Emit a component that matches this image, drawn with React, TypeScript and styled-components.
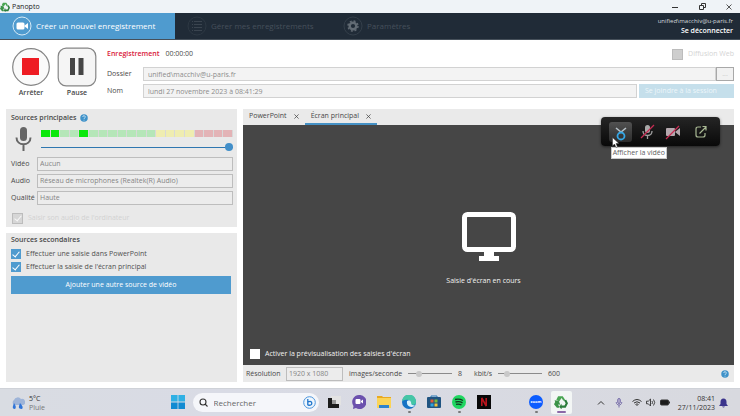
import React, { useState } from "react";
import styled, { createGlobalStyle, css } from "styled-components";

const blue = "#4f9bcf";

const GlobalStyle = createGlobalStyle`
  *, *::before, *::after { box-sizing: border-box; }
  body {
    margin: 0;
    background: #fff;
    color: #484848;
    font: 7px/10px "Open Sans", "Noto Sans", sans-serif;
  }
  button, input, select { font: inherit; color: inherit; margin: 0; padding: 0; border: 0; border-radius: 0; min-width: 0; }
  button { background: none; }
  svg { display: block; flex: none; }
  h2 { margin: 0; font-size: 7px; font-weight: 600; line-height: 10px; }
`;

const Page = styled.div`
  min-height: 100vh;
  display: flex;
  flex-direction: column;
`;

/* ---------- window title and navigation ---------- */
const TitleBar = styled.header`
  height: 13px;
  display: flex;
  align-items: center;
  gap: 2px;
  padding: 0 4px 0 0;
  background: #eff3f7;
  color: #222;
`;
const WindowButtons = styled.div`
  margin-left: auto;
  display: flex;
  gap: 13px;
`;
const WindowButton = styled.button`
  width: 14px;
  height: 13px;
  display: grid;
  place-items: center;
`;
const Nav = styled.nav`
  height: 27px;
  display: flex;
  background: #202b37;
  border-bottom: 1px solid #46505a;
`;
const NavItem = styled.button<{ $active?: boolean; $width: number }>`
  flex: none;
  width: ${(p) => p.$width}px;
  display: flex;
  align-items: center;
  gap: 4px;
  padding-left: 12px;
  font-size: 8px;
  white-space: nowrap;
  color: ${(p) => (p.$active ? "#fff" : "#46505b")};
  background: ${(p) => (p.$active ? blue : "transparent")};
`;
const Account = styled.div`
  margin-left: auto;
  padding: 3px 7px 0 0;
  display: flex;
  flex-direction: column;
  align-items: flex-end;
  color: #d5d9dd;
  font-size: 6px;
`;
const SignOut = styled.a`
  color: #fff;
  font-size: 7px;
  font-weight: 600;
  text-decoration: none;
`;

/* ---------- recording header ---------- */
const Recorder = styled.section`
  display: flex;
  padding: 7px 6px 11px 11px;
`;
const RecordButton = styled.button<{ $wide?: boolean }>`
  width: ${(p) => (p.$wide ? 52 : 40)}px;
  display: flex;
  flex-direction: column;
  align-items: center;
  gap: 1px;
  font-weight: 600;
`;
const SessionForm = styled.div`
  flex: 1;
  margin-left: 4px;
  display: flex;
  flex-direction: column;
  gap: 3px;
`;
const StatusRow = styled.div`
  display: flex;
  align-items: center;
  height: 14px;
  gap: 6px;
  margin-bottom: 3px;
`;
const Recording = styled.strong`
  color: #d9173a;
  font-weight: 600;
`;
const Webcast = styled.label`
  margin-left: auto;
  display: flex;
  align-items: center;
  gap: 5px;
  color: #d4d4d4;
`;
const FormRow = styled.div`
  display: flex;
  align-items: center;
  height: 14px;
`;
const FieldLabel = styled.label<{ $width: number }>`
  flex: none;
  width: ${(p) => p.$width}px;
`;
const TextField = styled.input`
  && {
    flex: 1;
    height: 14px;
    padding: 0 4px;
    border: 1px solid #d2d2d2;
    background: #f3f3f3;
    color: #8c8c8c;
  }
`;
const BrowseButton = styled.button`
  && {
    width: 18px;
    height: 14px;
    border: 1px solid #a8a8a8;
    background: #f1f1f1;
    color: #c8c8c8;
  }
`;
const JoinButton = styled.button`
  && {
    width: 95px;
    height: 14px;
    margin-left: 2px;
    padding-left: 6px;
    text-align: left;
    background: #c5dfeb;
    color: #edf6fa;
  }
`;

/* ---------- workspace ---------- */
const Workspace = styled.main`
  flex: 1;
  display: grid;
  grid-template-columns: 231px minmax(0, 1fr);
  gap: 6px;
  padding: 0 6px 6px;
`;
const Sidebar = styled.div`
  display: flex;
  flex-direction: column;
  gap: 6px;
`;
const Panel = styled.section<{ $grow?: boolean }>`
  padding: 4px 4px 3px 5px;
  background: #e9e9e9;
  ${(p) => p.$grow && css`flex: 1; padding-top: 2px;`}
`;
const PanelTitle = styled.div`
  display: flex;
  align-items: center;
  gap: 4px;
  margin-bottom: 3px;
`;
const AudioRow = styled.div`
  display: flex;
  gap: 4px;
  margin-bottom: 4px;
`;
const AudioControls = styled.div`
  flex: 1;
  padding-top: 4px;
`;
const Meter = styled.div`
  display: grid;
  grid-template-columns: repeat(20, 1fr);
  height: 7px;
`;
const segmentColors = { on: "#0be80b", green: "#b5e6b8", yellow: "#efedb0", red: "#e3b3b6" };
const Segment = styled.span<{ $level: keyof typeof segmentColors }>`
  border-right: 1px solid #d8d8d8;
  background: ${(p) => segmentColors[p.$level]};
`;
const Range = styled.input<{ $main?: boolean }>`
  && {
    appearance: none;
    display: block;
    flex: none;
    width: ${(p) => (p.$main ? "100%" : "44px")};
    height: ${(p) => (p.$main ? 12 : 10)}px;
    margin-top: ${(p) => (p.$main ? 4 : 0)}px;
    background: linear-gradient(${(p) => (p.$main ? "#2f77b0" : "#8b8b8b")}, ${(p) => (p.$main ? "#2f77b0" : "#8b8b8b")}) center / 100% 1px no-repeat;
  }
  &::-webkit-slider-thumb {
    appearance: none;
    width: ${(p) => (p.$main ? 8 : 6)}px;
    height: ${(p) => (p.$main ? 8 : 6)}px;
    border-radius: 50%;
    background: ${(p) => (p.$main ? "#428fc9" : "#c9c9c9")};
  }
`;
const SelectRow = styled.div`
  display: flex;
  align-items: center;
  margin-bottom: 3px;
`;
const Select = styled.select<{ $compact?: boolean }>`
  && {
    appearance: none;
    ${(p) => (p.$compact ? css`width: 57px;` : css`flex: 1;`)}
    height: 14px;
    padding: 0 2px;
    border: 1px solid #bdbdbd;
    background: #ececec;
    color: #858585;
    opacity: 1;
  }
`;
const CheckRow = styled.label<{ $faded?: boolean; $light?: boolean }>`
  display: flex;
  align-items: center;
  gap: 5px;
  height: 12px;
  margin-bottom: 1px;
  color: ${(p) => (p.$faded ? "#d2d2d2" : p.$light ? "#f2f2f2" : "#505050")};
  ${(p) => p.$faded && css`margin: 7px 0 0 1px;`}
`;
const Check = styled.input<{ $tone: "blue" | "grey" | "white" | "fill" }>`
  && {
    appearance: none;
    flex: none;
    display: grid;
    place-items: center;
    width: 10px;
    height: 10px;
    border: ${(p) => (p.$tone === "grey" || p.$tone === "fill" ? "1px solid #bcbcbc" : "0")};
    background: ${(p) => ({ blue, grey: "#d6d6d6", white: "#fff", fill: "#cecece" })[p.$tone]};
  }
  &&[disabled] {
    width: 11px;
    height: 11px;
  }
  &:checked::after {
    content: "";
    width: 4px;
    height: 7px;
    margin-bottom: 2px;
    border: solid ${(p) => (p.$tone === "grey" ? "#f7f7f7" : "#fff")};
    border-width: 0 1px 1px 0;
    transform: rotate(40deg);
  }
`;
const AddSource = styled.button`
  && {
    width: calc(100% - 2px);
    height: 18px;
    margin-top: 2px;
    background: ${blue};
    color: #fff;
  }
`;

/* ---------- preview ---------- */
const Preview = styled.section`
  position: relative;
  display: flex;
  flex-direction: column;
`;
const Tabs = styled.div`
  display: flex;
  height: 16px;
  background: #eaeaea;
`;
const Tab = styled.button<{ $active?: boolean }>`
  && {
    display: flex;
    align-items: center;
    gap: 7px;
    padding: 0 6px;
    border-bottom: 2px solid ${(p) => (p.$active ? "#4591c5" : "transparent")};
  }
`;
const Stage = styled.div`
  flex: 1;
  display: flex;
  flex-direction: column;
  padding: 0 6px 4px 7px;
  background: #464646;
  color: #f2f2f2;
`;
const StageCenter = styled.div`
  flex: 1;
  display: flex;
  flex-direction: column;
  align-items: center;
  justify-content: center;
  gap: 14px;
  padding-top: 24px;
`;
const StageCaption = styled.span`
  padding-right: 11px;
`;
const Settings = styled.div`
  display: flex;
  align-items: center;
  height: 17px;
  padding: 0 5px 0 3px;
  background: #eaeaea;
`;
const SettingLabel = styled.label<{ $width: number; $indent?: boolean }>`
  flex: none;
  width: ${(p) => p.$width}px;
  padding-left: ${(p) => (p.$indent ? 6 : 0)}px;
`;
const SettingValue = styled.output<{ $width: number }>`
  width: ${(p) => p.$width}px;
  padding-left: 6px;
`;
const HelpSlot = styled.div`
  margin-left: auto;
`;
const FloatingBar = styled.div`
  position: absolute;
  top: 8px;
  right: 14px;
  width: 119px;
  height: 29px;
  display: flex;
  align-items: center;
  gap: 3px;
  padding: 0 8px 0 8px;
  border-radius: 4px;
  background: linear-gradient(#252525, #090909);
  box-shadow: 0 1px 3px #0008;
`;
const MediaButton = styled.button<{ $hover?: boolean }>`
  && {
    width: 23px;
    height: 20px;
    display: grid;
    place-items: center;
    border-radius: 3px;
    background: ${(p) => (p.$hover ? "linear-gradient(#515151, #2c2c2c)" : "none")};
    &:last-child { margin-left: auto; }
  }
`;
const Tooltip = styled.div`
  position: absolute;
  top: 38px;
  right: 67px;
  padding: 0 1px;
  border: 1px solid #c9c9c9;
  background: #fff;
  color: #606060;
  white-space: nowrap;
`;
const Pointer = styled.svg`
  position: absolute;
  top: 28px;
  right: 114px;
`;

/* ---------- taskbar ---------- */
const Taskbar = styled.footer`
  height: 28px;
  display: grid;
  grid-template-columns: 1fr auto 1fr;
  align-items: center;
  padding: 0 12px 0 11px;
  border-top: 1px solid #cfd2d8;
  background: linear-gradient(90deg, #d9dce2, #d9dbe5 30%, #d8d9df);
`;
const Weather = styled.div`
  display: flex;
  align-items: center;
  gap: 4px;
  line-height: 9px;
  color: #333;
`;
const Muted = styled.div`
  color: #777;
`;
const Apps = styled.div`
  display: flex;
  align-items: center;
  padding-left: 3px;
`;
const SearchBox = styled.label`
  width: 126px;
  height: 19px;
  display: flex;
  align-items: center;
  gap: 6px;
  margin: 0 1px 0 8px;
  padding: 0 3px 0 6px;
  border-radius: 10px;
  background: #f5f6fa;
`;
const SearchInput = styled.input`
  && {
    flex: 1;
    background: none;
    font-size: 8px;
    outline: 0;
    &::placeholder { color: #666; opacity: 1; }
  }
`;
const AppButton = styled.button<{ $selected?: boolean; $open?: boolean; $spaced?: boolean }>`
  && {
    flex: none;
    width: 21px;
    height: 23px;
    margin-left: ${(p) => (p.$spaced ? 31 : 4)}px;
    display: flex;
    flex-direction: column;
    align-items: center;
    padding-top: 4px;
    gap: 2px;
    border-radius: 2px;
    background: ${(p) => (p.$selected ? "#f3f6f5" : "none")};
    &:first-child { width: 14px; margin-left: 0; }
  }
  &::after {
    content: "";
    width: ${(p) => (p.$selected ? 9 : 3)}px;
    height: 2px;
    border-radius: 1px;
    background: ${(p) => (p.$selected ? "#8b68a8" : p.$open ? "#777" : "transparent")};
  }
`;
const Tray = styled.div`
  justify-self: end;
  display: flex;
  align-items: center;
  gap: 4px;
  color: #333;
`;
const TrayGroup = styled.div`
  display: flex;
  align-items: center;
  gap: 10px;
  margin-right: 5px;
`;
const Clock = styled.time`
  margin-left: 4px;
  text-align: right;
  line-height: 9px;
`;

/* ---------- drawings ---------- */
const Recycle = ({ size }: { size: number }) => (
  <svg width={size} height={size} viewBox="0 0 24 24">
    <path d="M7 2h8l4 6-3 2-3-5-4 6-5-3z" fill="#49a552" />
    <path d="M17 9l4-1 3 6-4 8h-7v3l-4-5 4-5v3h5l2-4z" fill="#2d7c3c" />
    <path d="M1 9l7 1 3 7-3-1-1 2h2v4H5l-5-6 2-4z" fill="#3b9348" />
  </svg>
);
const Help = () => (
  <svg width="8" height="8" viewBox="0 0 16 16">
    <circle cx="8" cy="8" r="7.5" fill="#3f92c9" />
    <path d="M5.5 6a2.5 2.5 0 1 1 3.6 2.2Q8 8.7 8 10M8 11.5V13" fill="none" stroke="#d9edf8" strokeWidth="1.7" />
  </svg>
);
const Close = ({ size = 5 }: { size?: number }) => (
  <svg width={size} height={size} viewBox="0 0 6 6" stroke="#444" strokeWidth=".9">
    <path d="M.5.5l5 5M5.5.5l-5 5" />
  </svg>
);
const CameraBadge = () => (
  <svg width="20" height="20" viewBox="0 0 20 20">
    <circle cx="10" cy="10" r="9" fill="none" stroke="#d6eaf6" />
    <rect x="4.5" y="6.5" width="8" height="7" rx="1.5" fill="#fff" />
    <path d="M12 10l4-3v6z" fill="#fff" />
  </svg>
);
const ListBadge = () => (
  <svg width="20" height="20" viewBox="0 0 20 20" fill="none" stroke="#3a444f">
    <circle cx="10" cy="10" r="9" stroke="#2d3843" />
    <path d="M5 5.500h1M5 8.500h1M5 11.500h1M5 14.500h1M7 5.500h8M7 8.500h8M7 11.500h8M7 14.500h8" />
  </svg>
);
const GearBadge = () => (
  <svg width="20" height="20" viewBox="0 0 20 20" fill="none" stroke="#343f4a">
    <circle cx="10" cy="10" r="9" />
    <circle cx="10" cy="10" r="3.3" stroke="#626b74" strokeWidth="2.4" />
    <circle cx="10" cy="10" r="5" stroke="#626b74" strokeWidth="1.4" strokeDasharray="2 1.93" />
  </svg>
);
const StopIcon = () => (
  <svg width="40" height="40" viewBox="0 0 40 40">
    <circle cx="20" cy="20" r="18.3" fill="#fafafa" stroke="#858585" strokeWidth="1.2" />
    <rect x="11" y="11" width="17" height="17" fill="#ee1c23" />
  </svg>
);
const PauseIcon = () => (
  <svg width="40" height="40" viewBox="0 0 40 40">
    <rect x="1.2" y="1.2" width="37.6" height="37.6" rx="8" fill="#f5f5f5" stroke="#858585" strokeWidth="1.2" />
    <path d="M13 11h5v17h-5zM21.500 11h5v17h-5z" fill="#464646" />
  </svg>
);
const BigMic = () => (
  <svg width="26" height="26" viewBox="0 0 26 26" fill="none">
    <rect x="9" y="1" width="7" height="14" rx="3.5" fill="#666" />
    <path d="M5.500 11.500c0 9 14 9 14 0M12.500 18.500V25" stroke="#666" strokeWidth="2" />
  </svg>
);
const Monitor = () => (
  <svg width="54" height="50" viewBox="0 0 54 50">
    <rect x="2.500" y="2.500" width="49" height="35" rx="3" fill="none" stroke="#fff" strokeWidth="5" />
    <path d="M22 38h10v6h5v5H17v-5h5z" fill="#fff" />
  </svg>
);
const JoinVideo = () => (
  <svg width="16" height="18" viewBox="0 0 16 18" fill="none">
    <path d="M3 5l5 4 5-4" stroke="#b8c1c7" strokeWidth="1.6" />
    <circle cx="8" cy="13" r="3.500" stroke="#35a7e5" strokeWidth="1.8" />
  </svg>
);
const MutedMic = () => (
  <svg width="18" height="18" viewBox="0 0 18 18" fill="none">
    <rect x="7" y="2" width="5" height="8" rx="2.500" fill="#a8a8a8" />
    <path d="M5 8c0 6 9 6 9 0M9.500 12v4" stroke="#a0a0a0" strokeWidth="1.3" />
    <path d="M3 15L16 2" stroke="#c82c53" strokeWidth="1.2" />
  </svg>
);
const MutedCamera = () => (
  <svg width="18" height="18" viewBox="0 0 18 18" fill="none">
    <rect x="2" y="5" width="9" height="8" rx="1" fill="#b5a8ae" />
    <path d="M11 9l5-4v8z" fill="#b5a8ae" />
    <path d="M2 16L15 3" stroke="#c82c53" strokeWidth="1.3" />
  </svg>
);
const Popout = () => (
  <svg width="14" height="14" viewBox="0 0 14 14" fill="none" stroke="#a9b994" strokeWidth="1.2">
    <path d="M7 2H4Q2 2 2 4v6q0 2 2 2h5q2 0 2-2V8M5.500 8.500L12 2M8.500 1.500H12V5.500" />
  </svg>
);
const WeatherIcon = () => (
  <svg width="14" height="14" viewBox="0 0 14 14">
    <path d="M3 9a3 3 0 0 1 0-5 4 4 0 0 1 7-1 3 3 0 0 1 2 6z" fill="#9eb4d8" />
    <path d="M3 7q3 4 1 6-3 0-2-3zM9 7q4 4 2 6-4 0-3-3z" fill="#2f74d8" />
  </svg>
);
const WindowsLogo = () => (
  <svg width="14" height="14" viewBox="0 0 14 14">
    <path d="M0 0h6.600v6.600H0zM7.400 0H14v6.600H7.400z" fill="#2fb0e4" />
    <path d="M0 7.400h6.600V14H0zM7.400 7.400H14V14H7.400z" fill="#128bd2" />
  </svg>
);
const SearchIcon = () => (
  <svg width="9" height="9" viewBox="0 0 9 9" fill="none" stroke="#333" strokeWidth="1.1">
    <circle cx="4" cy="4" r="3" />
    <path d="M6 6l2.500 2.500" />
  </svg>
);
const BingIcon = () => (
  <svg width="13" height="13" viewBox="0 0 13 13" fill="none">
    <circle cx="6.500" cy="6.500" r="5.800" fill="#eef6fd" stroke="#4c94dc" />
    <path d="M4.800 3v6.200M4.800 6q4-1.600 4 1.300 0 2.500-4 1.800" stroke="#1e74cc" strokeWidth="1.3" />
  </svg>
);
const TaskView = () => (
  <svg width="14" height="14" viewBox="0 0 14 14">
    <rect x="4" y="1" width="10" height="9" fill="#e3e3e3" />
    <path d="M1 3h4v6h7v4H1z" fill="#1c1c1c" />
    <path d="M5 5h4v4H5z" fill="#9a9a9a" />
  </svg>
);
const ChatIcon = () => (
  <svg width="14" height="14" viewBox="0 0 14 14">
    <path d="M7 0a7 7 0 1 1-3 13l-3 1 .5-3A7 7 0 0 1 7 0z" fill="#6b51ad" />
    <rect x="3.500" y="4" width="5" height="5" rx="1" fill="#fff" />
    <path d="M9 6l2-1.500v4L9 7z" fill="#fff" />
  </svg>
);
const FolderIcon = () => (
  <svg width="14" height="14" viewBox="0 0 14 14">
    <path d="M0 1h5l1 1h8v4H0z" fill="#e9a921" />
    <path d="M0 3h14v10H0z" fill="#fbd457" />
    <path d="M2 10h10v3H2z" fill="#2f83cd" />
  </svg>
);
const EdgeIcon = () => (
  <svg width="14" height="14" viewBox="0 0 14 14">
    <circle cx="7" cy="7" r="7" fill="#1672c4" />
    <path d="M0 6a7 7 0 0 1 14 1q0 3-3 3-3 0-2-3Q7 3 0 6z" fill="#45c6a6" />
    <path d="M5 6q-1 5 4 6 3 .5 4-2-4 1-4-3-1-3-4-1z" fill="#d9f2fb" />
  </svg>
);
const StoreIcon = () => (
  <svg width="14" height="14" viewBox="0 0 14 14">
    <path d="M4 3V1h6v2" fill="none" stroke="#2679b7" />
    <rect y="2" width="14" height="11" rx="1" fill="#205481" />
    <path d="M3.500 4.500h3v3h-3z" fill="#e35b36" />
    <path d="M7.500 4.500h3v3h-3z" fill="#7cbb38" />
    <path d="M3.500 8.500h3v3h-3z" fill="#30a4dc" />
    <path d="M7.500 8.500h3v3h-3z" fill="#f3c43b" />
  </svg>
);
const SpotifyIcon = () => (
  <svg width="14" height="14" viewBox="0 0 14 14" fill="none" stroke="#143820" strokeWidth="1.400">
    <circle cx="7" cy="7" r="7" fill="#1fd660" stroke="none" />
    <path d="M3 4.500q4.500-1 8 1M3.500 7q4-1 7 .8M4 9.400q3-.8 5.500.6" />
  </svg>
);
const NetflixIcon = () => (
  <svg width="14" height="14" viewBox="0 0 14 14">
    <rect width="14" height="14" fill="#080808" />
    <path d="M4.800 11V3l4.400 8V3" fill="none" stroke="#b8141c" strokeWidth="1.600" />
  </svg>
);
const ZoomWord = styled.text`
  font: 700 4px "Open Sans", sans-serif;
  fill: #fff;
`;
const ZoomIcon = () => (
  <svg width="14" height="14" viewBox="0 0 14 14">
    <circle cx="7" cy="7" r="7" fill="#0b5cff" />
    <ZoomWord x="7" y="8" textAnchor="middle">zoom</ZoomWord>
  </svg>
);
const Chevron = () => (
  <svg width="8" height="8" viewBox="0 0 8 8" fill="none" stroke="#333">
    <path d="M1 5.500l3-3 3 3" />
  </svg>
);
const TrayMic = () => (
  <svg width="8" height="10" viewBox="0 0 8 10" fill="none" stroke="#7166a5" strokeWidth=".9">
    <rect x="2.700" y=".5" width="2.600" height="5" rx="1.300" fill="#b5afcf" />
    <path d="M1.200 4c0 4 5.600 4 5.600 0M4 7v2.500" />
  </svg>
);
const Wifi = () => (
  <svg width="10" height="9" viewBox="0 0 10 9" fill="none" stroke="#333">
    <path d="M.5 3.500q4.500-4 9 0M2 5q3-2.500 6 0M3.500 6.500q1.500-1.200 3 0" />
    <circle cx="5" cy="7.500" r=".6" fill="#333" stroke="none" />
  </svg>
);
const Volume = () => (
  <svg width="10" height="9" viewBox="0 0 10 9" fill="none" stroke="#333" strokeWidth=".9">
    <path d="M.5 3.200h1.800L4.500 1v7L2.300 5.800H.5zM6 3q1 1.500 0 3M7.500 1.500q2.400 3 0 6" />
  </svg>
);
const Battery = () => (
  <svg width="10" height="7" viewBox="0 0 10 7">
    <rect x=".5" y="1" width="8" height="5" rx="1" fill="#1c1c1c" stroke="#333" />
    <path d="M9 2.500h1v2H9z" fill="#333" />
  </svg>
);
const Bell = () => (
  <svg width="9" height="10" viewBox="0 0 9 10" fill="#3b348c">
    <path d="M4.500.5Q7.500.5 7.500 4v2L9 8H0l1.500-2V4q0-3.500 3-3.500zM3 8.500h3q-1.500 2-3 0z" />
  </svg>
);

const levels: (keyof typeof segmentColors)[] = Array.from({ length: 20 }, (_, i) =>
  [0, 1, 4].includes(i) ? "on" : i < 12 ? "green" : i < 16 ? "yellow" : "red"
);
const sources = [
  { id: "video", label: "Vidéo", value: "Aucun" },
  { id: "audio", label: "Audio", value: "Réseau de microphones (Realtek(R) Audio)" },
  { id: "quality", label: "Qualité", value: "Haute" },
];
const apps = [
  { name: "Applications", icon: <TaskView /> },
  { name: "Conversation", icon: <ChatIcon /> },
  { name: "Explorateur", icon: <FolderIcon /> },
  { name: "Edge", icon: <EdgeIcon />, open: true },
  { name: "Store", icon: <StoreIcon /> },
  { name: "Spotify", icon: <SpotifyIcon />, open: true },
  { name: "Netflix", icon: <NetflixIcon /> },
  { name: "Zoom", icon: <ZoomIcon />, open: true, spaced: true },
  { name: "Panopto", icon: <Recycle size={14} />, selected: true },
];

export default function App() {
  const [volume, setVolume] = useState(100);
  const [fps, setFps] = useState(8);
  const [rate, setRate] = useState(600);
  return (
    <Page>
      <GlobalStyle />
      <TitleBar>
        <Recycle size={10} />
        Panopto
        <WindowButtons>
          <WindowButton aria-label="Réduire">
            <svg width="6" height="6" stroke="#333"><path d="M0 3.500h6" /></svg>
          </WindowButton>
          <WindowButton aria-label="Restaurer">
            <svg width="7" height="7" fill="none" stroke="#333"><path d="M.5 2.500h4v4h-4zM2.500 2V.5h4v4H5" /></svg>
          </WindowButton>
          <WindowButton aria-label="Fermer"><Close size={6} /></WindowButton>
        </WindowButtons>
      </TitleBar>
      <Nav>
        <NavItem $active $width={175}><CameraBadge />Créer un nouvel enregistrement</NavItem>
        <NavItem $width={156}><ListBadge />Gérer mes enregistrements</NavItem>
        <NavItem $width={100}><GearBadge />Paramètres</NavItem>
        <Account>
          <span>unified\macchiv@u-paris.fr</span>
          <SignOut href="#">Se déconnecter</SignOut>
        </Account>
      </Nav>

      <Recorder>
        <RecordButton><StopIcon />Arrêter</RecordButton>
        <RecordButton $wide><PauseIcon />Pause</RecordButton>
        <SessionForm>
          <StatusRow>
            <Recording>Enregistrement</Recording>
            <span>00:00:00</span>
            <Webcast><Check type="checkbox" $tone="fill" disabled />Diffusion Web</Webcast>
          </StatusRow>
          <FormRow>
            <FieldLabel $width={36} htmlFor="folder">Dossier</FieldLabel>
            <TextField id="folder" readOnly value="unified\macchiv@u-paris.fr" />
            <BrowseButton aria-label="Parcourir">...</BrowseButton>
          </FormRow>
          <FormRow>
            <FieldLabel $width={36} htmlFor="name">Nom</FieldLabel>
            <TextField id="name" readOnly value="lundi 27 novembre 2023 à 08:41:29" />
            <JoinButton>Se joindre à la session</JoinButton>
          </FormRow>
        </SessionForm>
      </Recorder>

      <Workspace>
        <Sidebar>
          <Panel>
            <PanelTitle><h2>Sources principales</h2><Help /></PanelTitle>
            <AudioRow>
              <BigMic />
              <AudioControls>
                <Meter>{levels.map((level, i) => <Segment key={i} $level={level} />)}</Meter>
                <Range $main type="range" aria-label="Volume" value={volume} onChange={(e) => setVolume(+e.target.value)} />
              </AudioControls>
            </AudioRow>
            {sources.map((s) => (
              <SelectRow key={s.id}>
                <FieldLabel $width={26} htmlFor={s.id}>{s.label}</FieldLabel>
                <Select id={s.id}><option>{s.value}</option></Select>
              </SelectRow>
            ))}
            <CheckRow $faded><Check type="checkbox" $tone="grey" defaultChecked disabled />Saisir son audio de l'ordinateur</CheckRow>
          </Panel>
          <Panel $grow>
            <PanelTitle><h2>Sources secondaires</h2></PanelTitle>
            <CheckRow><Check type="checkbox" $tone="blue" defaultChecked />Effectuer une saisie dans PowerPoint</CheckRow>
            <CheckRow><Check type="checkbox" $tone="blue" defaultChecked />Effectuer la saisie de l'écran principal</CheckRow>
            <AddSource>Ajouter une autre source de vidéo</AddSource>
          </Panel>
        </Sidebar>

        <Preview>
          <Tabs>
            <Tab>PowerPoint <Close /></Tab>
            <Tab $active>Écran principal <Close /></Tab>
          </Tabs>
          <Stage>
            <StageCenter><Monitor /><StageCaption>Saisie d'écran en cours</StageCaption></StageCenter>
            <CheckRow $light><Check type="checkbox" $tone="white" />Activer la prévisualisation des saisies d'écran</CheckRow>
          </Stage>
          <Settings>
            <SettingLabel $width={40} htmlFor="resolution">Résolution</SettingLabel>
            <Select $compact id="resolution"><option>1920 x 1080</option></Select>
            <SettingLabel $width={65} $indent htmlFor="fps">images/seconde</SettingLabel>
            <Range id="fps" type="range" min={0} max={40} value={fps} onChange={(e) => setFps(+e.target.value)} />
            <SettingValue $width={22}>{fps}</SettingValue>
            <SettingLabel $width={24} htmlFor="rate">kbit/s</SettingLabel>
            <Range id="rate" type="range" min={0} max={4000} step={50} value={rate} onChange={(e) => setRate(+e.target.value)} />
            <SettingValue $width={30}>{rate}</SettingValue>
            <HelpSlot><Help /></HelpSlot>
          </Settings>
          <FloatingBar>
            <MediaButton $hover aria-label="Afficher la vidéo"><JoinVideo /></MediaButton>
            <MediaButton aria-label="Micro"><MutedMic /></MediaButton>
            <MediaButton aria-label="Caméra"><MutedCamera /></MediaButton>
            <MediaButton aria-label="Agrandir"><Popout /></MediaButton>
          </FloatingBar>
          <Tooltip role="tooltip">Afficher la vidéo</Tooltip>
          <Pointer width="8" height="11" viewBox="0 0 8 11">
            <path d="M.5.5v8.500l2-2 1.500 3.500 1.500-.7L4 6.500h3z" fill="#fff" stroke="#333" strokeWidth=".5" />
          </Pointer>
        </Preview>
      </Workspace>

      <Taskbar>
        <Weather>
          <WeatherIcon />
          <div>5°C<Muted>Pluie</Muted></div>
        </Weather>
        <Apps>
          <AppButton aria-label="Démarrer"><WindowsLogo /></AppButton>
          <SearchBox>
            <SearchIcon />
            <SearchInput type="text" aria-label="Rechercher" placeholder="Rechercher" />
            <BingIcon />
          </SearchBox>
          {apps.map((a) => (
            <AppButton key={a.name} aria-label={a.name} $open={a.open} $spaced={a.spaced} $selected={a.selected}>{a.icon}</AppButton>
          ))}
        </Apps>
        <Tray>
          <TrayGroup><Chevron /><TrayMic /></TrayGroup>
          <Wifi /><Volume /><Battery />
          <Clock>08:41<br />27/11/2023</Clock>
          <Bell />
        </Tray>
      </Taskbar>
    </Page>
  );
}
